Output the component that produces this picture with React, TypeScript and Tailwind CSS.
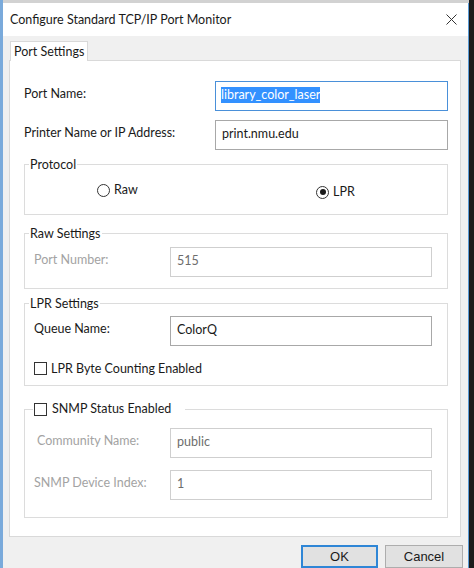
import React from "react";

const ui = { fontFamily: 'Lato, "Noto Sans", sans-serif' };
const btnFont = { fontFamily: '"Liberation Sans", Arial, sans-serif' };

function Radio({ checked }: { checked?: boolean }) {
  return (
    <span className="w-[13px] h-[13px] rounded-full border border-[#333] bg-white flex items-center justify-center shrink-0">
      {checked && <span className="w-[6px] h-[6px] rounded-full bg-[#1a1a1a]" />}
    </span>
  );
}

function Checkbox() {
  return <span className="w-[13px] h-[13px] border border-[#333] bg-white shrink-0 block" />;
}

function Field({
  label,
  value,
  disabled,
  indent,
}: {
  label: string;
  value: string;
  disabled?: boolean;
  indent?: boolean;
}) {
  return (
    <div className="flex items-center">
      <span
        className={`w-[136px] pb-[5px] ${indent ? "pl-[3px]" : ""} ${
          disabled ? "text-[#a3a3a3]" : "text-[#1a1a1a]"
        }`}
      >
        {label}
      </span>
      <div
        className={`w-[262px] h-[30px] border bg-white flex items-center px-[6px] pb-[3px] ${
          disabled ? "border-[#cfcfcf] text-[#6d6d6d]" : "border-[#a8a8a8] text-[#1a1a1a]"
        }`}
      >
        {value}
      </div>
    </div>
  );
}

export default function App() {
  return (
    <div
      className="w-[474px] h-[568px] overflow-hidden flex bg-[#1c1c1c] text-[12.5px] leading-[16px]"
      style={ui}
    >
      <div className="w-[3px] h-full bg-[#7aaadb]" />

      <div className="w-[466px] flex flex-col">
        <div className="h-[3px] bg-[#d2d2d2]" />

        <div className="flex-1 flex flex-col bg-[#f0f0f0] border-r border-[#5b9bd5]">
          {/* title bar */}
          <div className="h-[33px] bg-white flex items-center justify-between pl-[7px] pr-[11px]">
            <span className="text-[#1a1a1a] text-[12.5px]">Configure Standard TCP/IP Port Monitor</span>
            <svg width="11" height="11" viewBox="0 0 11 11">
              <path d="M0.5 0.5 L10.5 10.5 M10.5 0.5 L0.5 10.5" stroke="#333" strokeWidth="1" />
            </svg>
          </div>

          <div className="flex flex-col pt-[5px] pl-[6px] pr-[7px]">
            {/* tab */}
            <div className="flex">
              <div className="ml-[1px] h-[20px] -mb-px relative z-10 bg-white border border-b-0 border-[#d9d9d9] pl-[3px] pr-[3px] pt-[1px] flex items-center text-[#1a1a1a]">
                Port Settings
              </div>
            </div>

            {/* panel */}
            <div className="bg-white border border-[#d9d9d9] pt-[20px] pb-[18px] pl-[14px] pr-[12px] flex flex-col">
              <div className="flex items-center">
                <span className="w-[191px] pb-[5px] text-[#1a1a1a]">Port Name:</span>
                <div className="w-[233px] h-[30px] border border-[#4a90d9] bg-white flex items-center px-[5px] pb-[3px]">
                  <span className="bg-[#3391ff] text-white">library_color_laser</span>
                </div>
              </div>
              <div className="flex items-center mt-[9px]">
                <span className="w-[191px] pb-[5px] text-[#1a1a1a]">Printer Name or IP Address:</span>
                <div className="w-[233px] h-[30px] border border-[#a8a8a8] bg-white flex items-center px-[6px] pb-[3px] text-[#1a1a1a]">
                  print.nmu.edu
                </div>
              </div>

              {/* protocol */}
              <fieldset className="mt-[6px] border border-[#dcdcdc]">
                <legend className="ml-[4px] px-[1px] pt-[1px] text-[#1a1a1a]">Protocol</legend>
                <div className="flex items-start pl-[72px] mt-[10px] pb-[15px]">
                  <label className="w-[219px] h-[14px] flex items-center gap-[4px] text-[#1a1a1a]">
                    <Radio />
                    Raw
                  </label>
                  <label className="mt-[2px] h-[14px] flex items-center gap-[4px] text-[#1a1a1a]">
                    <Radio checked />
                    LPR
                  </label>
                </div>
              </fieldset>

              {/* raw settings */}
              <fieldset className="mt-[10px] border border-[#dcdcdc]">
                <legend className="ml-[4px] px-[1px] pt-[1px] text-[#1a1a1a]">Raw Settings</legend>
                <div className="mt-[5px] pl-[9px] pb-[11px]">
                  <Field label="Port Number:" value="515" disabled />
                </div>
              </fieldset>

              {/* lpr settings */}
              <fieldset className="mt-[6px] border border-[#dcdcdc]">
                <legend className="ml-[4px] px-[1px] pt-[1px] text-[#1a1a1a]">LPR Settings</legend>
                <div className="mt-[4px] pl-[9px] pb-[10px] flex flex-col">
                  <Field label="Queue Name:" value="ColorQ" />
                  <label className="mt-[16px] h-[13px] flex items-center gap-[4px] text-[#1a1a1a]">
                    <Checkbox />
                    LPR Byte Counting Enabled
                  </label>
                </div>
              </fieldset>

              {/* snmp */}
              <fieldset className="mt-[15px] border border-[#dcdcdc]">
                <legend className="ml-[8px] pl-[1px] pr-[14px] h-[16px] flex items-center gap-[5px] text-[#1a1a1a]">
                  <Checkbox />
                  SNMP Status Enabled
                </legend>
                <div className="mt-[11px] pl-[9px] pb-[17px] flex flex-col gap-[12px]">
                  <Field label="Community Name:" value="public" disabled indent />
                  <Field label="SNMP Device Index:" value="1" disabled />
                </div>
              </fieldset>
            </div>

            {/* buttons */}
            <div className="flex justify-end gap-[7px] mt-[8px] -mr-[2px]" style={btnFont}>
              <button className="w-[77px] h-[23px] bg-[#e1e1e1] border-2 border-[#2f86d6] text-[#1a1a1a] text-[13px]">
                OK
              </button>
              <button className="w-[78px] h-[23px] bg-[#e1e1e1] border border-[#adadad] text-[#1a1a1a] text-[13px]">
                Cancel
              </button>
            </div>
          </div>
        </div>
      </div>

      <div className="flex-1 h-full bg-[#1c1c1c]" />
    </div>
  );
}
